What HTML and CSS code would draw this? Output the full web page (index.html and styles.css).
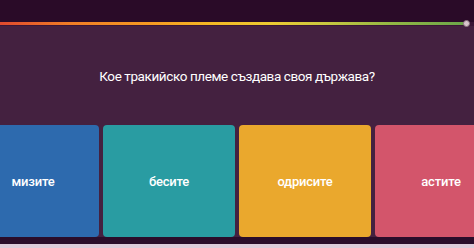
FILE: index.html
```html
<!DOCTYPE html>
<html>
<head>
<meta charset="utf-8">
<link rel="stylesheet" href="styles.css">
</head>
<body>
<div class="page">
  <div class="topband"></div>
  <div class="progress">
    <div class="bar"></div>
    <div class="knob"></div>
  </div>
  <div class="main">
    <div class="question">Кое тракийско племе създава своя държава?</div>
    <div class="answers">
      <div class="card blue">мизите</div>
      <div class="card teal">бесите</div>
      <div class="card orange">одрисите</div>
      <div class="card pink">астите</div>
    </div>
  </div>
  <div class="footer"></div>
  <div class="footline"></div>
</div>
</body>
</html>
```

FILE: styles.css
```css
html, body {
  margin: 0;
  padding: 0;
  background: #442140;
  overflow: hidden;
}
.page {
  width: 474px;
  height: 248px;
  display: flex;
  flex-direction: column;
  font-family: Roboto, "Liberation Sans", Arial, sans-serif;
  overflow: hidden;
}
.topband {
  height: 22px;
  background: #2a0b28;
}
.progress {
  position: relative;
  height: 4px;
  background: #3a1636;
}
.bar {
  height: 3px;
  width: 466px;
  background: linear-gradient(90deg, #e04a2e 0%, #f07e26 15%, #f59a22 32%, #f4b824 45%, #eccb32 58%, #c8c840 70%, #92b844 84%, #6aa64a 100%);
}
.knob {
  position: absolute;
  left: 463px;
  top: -2px;
  width: 5px;
  height: 5px;
  border-radius: 50%;
  background: #d8c6cc;
  border: 1px solid #8a7580;
}
.main {
  flex: 1;
  display: flex;
  flex-direction: column;
  background: #442140;
}
.question {
  margin-top: 40px;
  text-align: center;
  color: #ffffff;
  font-size: 13.5px;
  letter-spacing: -0.4px;
  line-height: 20px;
}
.answers {
  margin-top: 39px;
  display: flex;
  justify-content: center;
  gap: 4px;
}
.card {
  flex: 0 0 132px;
  height: 112px;
  border-radius: 4px;
  display: flex;
  align-items: center;
  justify-content: center;
  color: #ffffff;
  font-size: 13px;
  letter-spacing: -0.2px;
  font-weight: 500;
}
.blue { background: #2d6aae; }
.teal { background: #299ca2; }
.orange { background: #eaa82d; }
.pink { background: #d3556b; }
.footer {
  height: 7px;
  background: #2a0d2a;
}
.footline {
  height: 4px;
  background: #dccbd9;
}
```
